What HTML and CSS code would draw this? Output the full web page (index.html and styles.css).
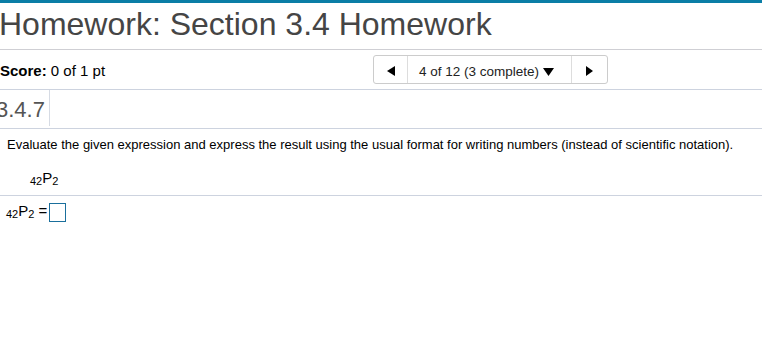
FILE: index.html
```html
<!DOCTYPE html>
<html>
<head>
<meta charset="utf-8">
<link rel="stylesheet" href="styles.css">
</head>
<body>
<div class="topbar"></div>
<div class="title">Homework: Section 3.4 Homework</div>
<div class="scorerow">
  <div class="score"><b>Score:</b> 0 of 1 pt</div>
  <div class="nav">
    <div class="navbtn prev"><svg width="8" height="10" viewBox="0 0 8 10"><polygon points="8,0 8,10 0,5" fill="#000"/></svg></div>
    <div class="navmid">4 of 12 (3 complete)<svg class="down" width="11" height="8" viewBox="0 0 11 8"><polygon points="0,0 11,0 5.5,8" fill="#000"/></svg></div>
    <div class="navbtn next"><svg width="7" height="10" viewBox="0 0 7 10"><polygon points="0,0 7,5 0,10" fill="#000"/></svg></div>
  </div>
</div>
<div class="secrow">
  <div class="secnum"><span>3.4.7</span></div>
</div>
<div class="question">
  <p class="prompt">Evaluate the given expression and express the result using the usual format for writing numbers (instead of scientific notation).</p>
  <div class="expr"><span class="sub">42</span>P<span class="sub">2</span></div>
</div>
<div class="answer">
  <span class="sub">42</span>P<span class="sub">2</span> =<span class="box"></span>
</div>
</body>
</html>
```
FILE: styles.css
```css
html, body {
  margin: 0;
  padding: 0;
  background: #fff;
  font-family: "Liberation Sans", Arial, sans-serif;
  color: #000;
  overflow: hidden;
}
.topbar {
  height: 3px;
  background: #0b7ea6;
}
.title {
  font-size: 32px;
  line-height: 37px;
  color: #454545;
  padding: 3px 0 6px 0;
  margin-left: -1px;
  border-bottom: 1px solid #cfcfd4;
  white-space: nowrap;
}
.scorerow {
  display: grid;
  grid-template-columns: 373px auto;
  align-items: start;
  height: 39px;
  border-bottom: 1px solid #cdd3df;
}
.score {
  font-size: 15px;
  line-height: 17px;
  padding-top: 12px;
}
.nav {
  margin-top: 5px;
  display: flex;
  width: 233px;
  height: 27px;
  border: 1px solid #cccccc;
  border-radius: 3px;
}
.navbtn {
  display: flex;
  align-items: center;
  justify-content: center;
}
.prev {
  width: 34px;
  border-right: 1px solid #dddddd;
  padding-top: 3px;
  box-sizing: border-box;
}
.next {
  width: 36px;
  border-left: 1px solid #dddddd;
  padding-top: 3px;
  box-sizing: border-box;
}
.navmid {
  flex: 1;
  display: flex;
  align-items: center;
  font-size: 13.5px;
  color: #222;
  padding-left: 11px;
  padding-top: 4px;
  box-sizing: border-box;
  white-space: nowrap;
}
.down {
  margin-left: 4px;
}
.secrow {
  height: 38px;
  border-bottom: 1px solid #cdd3df;
  display: flex;
}
.secnum {
  width: 50px;
  border-right: 1px solid #d6dbe4;
  height: 36px;
  font-size: 22px;
  line-height: 26px;
  color: #555;
  padding-top: 7px;
  box-sizing: border-box;
  overflow: hidden;
}
.secnum span {
  margin-left: -4px;
}
.question {
  padding: 8px 0 8px 7px;
  border-bottom: 1px solid #cdd3df;
}
.prompt {
  margin: 0;
  font-size: 13px;
  line-height: 16px;
  white-space: nowrap;
}
.expr {
  margin-top: 15px;
  margin-left: 23px;
  font-size: 15px;
  line-height: 19px;
}
.sub {
  font-size: 11px;
  line-height: 0;
  vertical-align: -2px;
}
.answer {
  padding: 6px 0 0 6px;
  font-size: 15px;
  line-height: 18px;
}
.box {
  display: inline-block;
  width: 15px;
  height: 17px;
  border: 1px solid #1a6f9c;
  vertical-align: -6px;
  margin-left: 2px;
}
```
